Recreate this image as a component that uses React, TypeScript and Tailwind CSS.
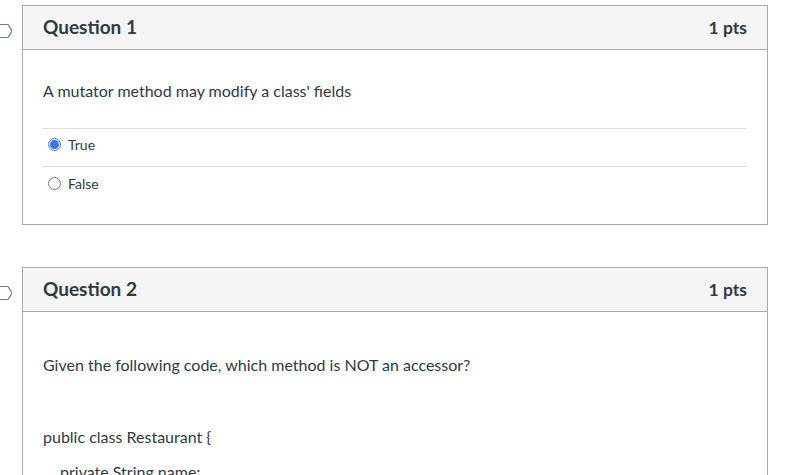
function Flag() {
  return (
    <svg
      width="16"
      height="16"
      viewBox="0 0 16 16"
      className="absolute -left-[4px] top-[18px]"
      aria-hidden="true"
    >
      <path d="M1 1.5 H12 L16 8 L12 14.5 H1 Z" fill="#fff" stroke="#6b7f95" strokeWidth="1.2" />
    </svg>
  )
}

function Radio({ checked }: { checked?: boolean }) {
  return checked ? (
    <span className="flex h-[13px] w-[13px] items-center justify-center rounded-full border border-[#3b82f6] bg-white">
      <span className="h-[9px] w-[9px] rounded-full bg-[#3b73f6]" />
    </span>
  ) : (
    <span className="h-[13px] w-[13px] rounded-full border border-[#777] bg-white" />
  )
}

function QuestionHeader({ title }: { title: string }) {
  return (
    <div className="flex h-[44px] items-center justify-between border-b border-[#aaaaaa] bg-[#f5f5f5] pl-[20px] pr-[20px]">
      <span className="text-[19px] font-bold text-[#2d3b45]">{title}</span>
      <span className="pt-[2px] text-[17.5px] font-bold text-[#2d3b45]">1 pts</span>
    </div>
  )
}

export default function App() {
  return (
    <div
      className="min-h-[475px] overflow-hidden bg-white pl-[22px] pt-[5px] text-[#2d3b45]"
      style={{ fontFamily: 'Lato, "Liberation Sans", sans-serif' }}
    >
      {/* Question 1 */}
      <div className="relative w-[746px]">
        <div className="absolute -left-[22px] top-0">
          <Flag />
        </div>
        <div className="border border-[#aaaaaa]">
          <QuestionHeader title="Question 1" />
          <div className="px-[20px] pb-[19px] pt-[31px]">
            <p className="text-[16px] leading-[20px]">A mutator method may modify a class&#39; fields</p>
            <div className="mt-[27px] border-t border-[#dddddd]">
              <label className="flex h-[38px] items-center gap-[7px] border-b border-[#dddddd] pb-[6px] pl-[5px] text-[14px]">
                <Radio checked />
                <span>True</span>
              </label>
              <label className="flex h-[38px] items-center gap-[7px] pb-[6px] pl-[5px] text-[14px]">
                <Radio />
                <span>False</span>
              </label>
            </div>
          </div>
        </div>
      </div>

      {/* Question 2 */}
      <div className="relative mt-[42px] w-[746px]">
        <div className="absolute -left-[22px] top-0">
          <Flag />
        </div>
        <div className="border border-[#aaaaaa]">
          <QuestionHeader title="Question 2" />
          <div className="px-[20px] pt-[43px] text-[16px] leading-[20px]">
            <p>Given the following code, which method is NOT an accessor?</p>
            <p className="mt-[52px]">public class Restaurant {"{"}</p>
            <p className="mt-[15px] pl-[17px]">private String name;</p>
          </div>
        </div>
      </div>
    </div>
  )
}
